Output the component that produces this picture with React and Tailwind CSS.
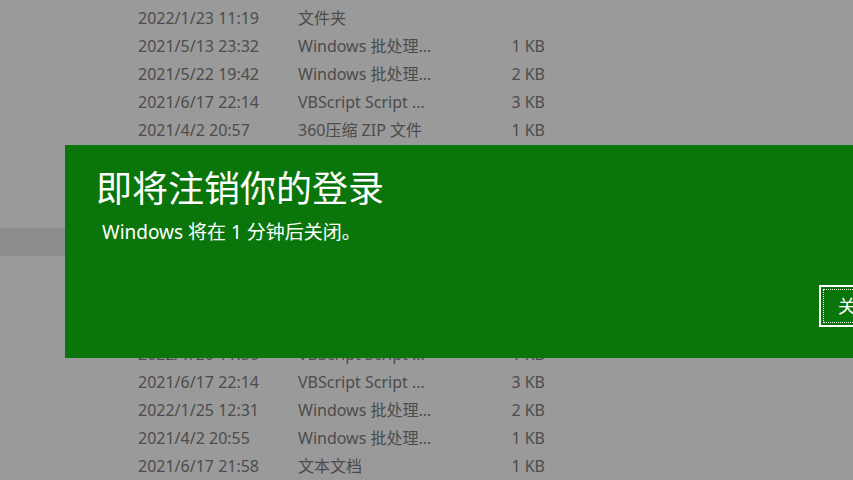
const rows = [
    ["2022/1/23 11:19", "文件夹", ""],
    ["2021/5/13 23:32", "Windows 批处理...", "1 KB"],
    ["2021/5/22 19:42", "Windows 批处理...", "2 KB"],
    ["2021/6/17 22:14", "VBScript Script ...", "3 KB"],
    ["2021/4/2 20:57", "360压缩 ZIP 文件", "1 KB"],
    ["2021/6/17 22:10", "Windows 批处理...", "1 KB"],
    ["2021/5/13 23:30", "Windows 批处理...", "1 KB"],
    ["2021/6/17 22:12", "VBScript Script ...", "2 KB"],
    ["2021/4/2 20:51", "Windows 批处理...", "1 KB"],
    ["2021/6/17 21:40", "文本文档", "1 KB"],
    ["2022/1/20 11:02", "Windows 批处理...", "1 KB"],
    ["2021/6/17 22:05", "VBScript Script ...", "2 KB"],
    ["2022/1/20 11:30", "VBScript Script ...", "1 KB"],
    ["2021/6/17 22:14", "VBScript Script ...", "3 KB"],
    ["2022/1/25 12:31", "Windows 批处理...", "2 KB"],
    ["2021/4/2 20:55", "Windows 批处理...", "1 KB"],
    ["2021/6/17 21:58", "文本文档", "1 KB"],
];

const font = { fontFamily: '"Noto Sans", "Noto Sans CJK SC", sans-serif' };

const App = () => {
    return (
        <div className="relative w-[853px] h-[480px] overflow-hidden bg-[#9a9a9a]" style={font}>
            {/* file list behind the dialog */}
            <div className="flex flex-col pt-[4px]">
                {rows.map((r, i) => (
                    <div key={i} className="flex h-[28px] items-center text-[16px] text-[#4c4c4c]">
                        <div className={`w-[138px] h-full ${i === 8 ? "bg-[#8c8c8c]" : ""}`}></div>
                        <div className="w-[160px] whitespace-nowrap">{r[0]}</div>
                        <div className="w-[180px] whitespace-nowrap">{r[1]}</div>
                        <div className="w-[67px] text-right whitespace-nowrap">{r[2]}</div>
                    </div>
                ))}
            </div>

            {/* sign-out notice */}
            <div className="absolute left-[65px] top-[145px] right-0 h-[213px] bg-[#0a750a] text-white">
                <div className="pl-[31px] pt-[22px]">
                    <h1 className="text-[36px] leading-[44px] font-normal">即将注销你的登录</h1>
                    <p className="pl-[6px] mt-[8px] text-[19px] leading-[26px]">Windows 将在 1 分钟后关闭。</p>
                </div>
                <button
                    type="button"
                    className="absolute left-[754px] top-[140px] w-[90px] h-[42px] border-2 border-white p-[2px] text-left"
                >
                    <span className="flex items-center h-full pl-[14px] border border-dotted border-white text-[18px]">关闭</span>
                </button>
            </div>
        </div>
    );
};

export default App;
